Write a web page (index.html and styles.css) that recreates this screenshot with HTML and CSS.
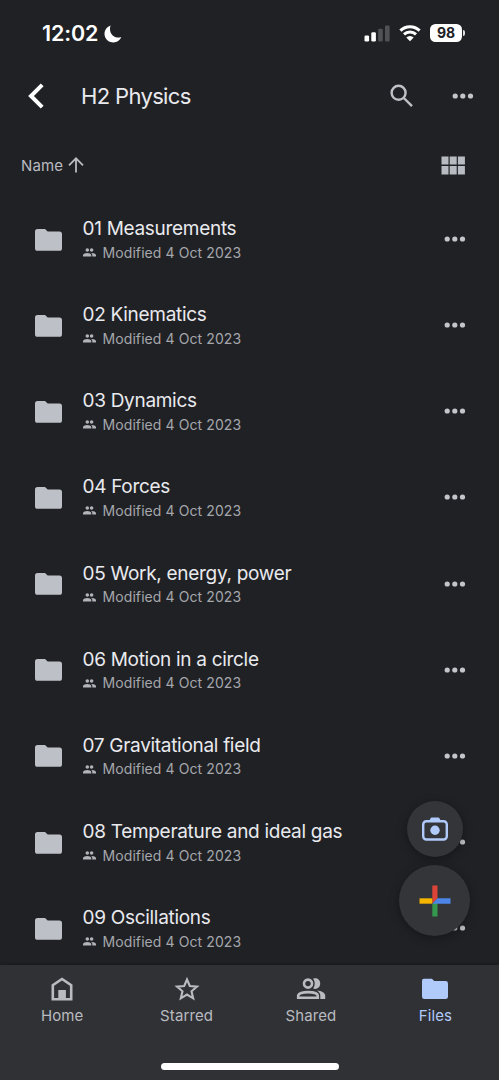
FILE: index.html
```html
<!DOCTYPE html>
<html lang="en">
<head>
<meta charset="utf-8">
<title>H2 Physics</title>
<link rel="stylesheet" href="styles.css">
</head>
<body>
<svg class="defs" width="0" height="0">
  <symbol id="folder" viewBox="0 0 28 22" preserveAspectRatio="none"><path d="M2.6 0H10.4L13.2 2.6H25.4Q28 2.6 28 5.2V19.2Q28 21.8 25.4 21.8H2.6Q0 21.8 0 19.2V2.6Q0 0 2.6 0Z"/></symbol>
  <symbol id="people" viewBox="0 0 13 9"><circle cx="4.3" cy="2" r="1.8"/><circle cx="8.6" cy="2" r="1.8"/><path d="M0 8.4V7.2C0 5.6 2.6 4.9 4.3 4.9S8.3 5.6 8.3 7.2V8.4ZM9.3 8.4V7.1C9.3 6.2 8.9 5.5 8.2 5C10.2 4.9 13 5.6 13 7.2V8.4Z"/></symbol>
  <symbol id="dots" viewBox="0 0 22 6"><circle cx="3.2" cy="3" r="2.6"/><circle cx="10.8" cy="3" r="2.6"/><circle cx="18.5" cy="3" r="2.6"/></symbol>
</svg>
<div class="screen">
  <div class="status">
    <span class="time">12:02</span>
    <svg class="moon" width="18" height="18" viewBox="0 0 18 18"><path d="M6.6 .5A8.7 8.7 0 1 0 17.3 12C11 14.6 3.8 8.6 6.6 .5Z"/></svg>
    <svg class="signal" width="26" height="17" viewBox="0 0 26 17"><rect x=".5" y="10.5" width="4.6" height="6" rx="1.3"/><rect x="7.3" y="7.3" width="4.6" height="9.2" rx="1.3"/><rect class="off" x="14.2" y="3.8" width="4.6" height="12.7" rx="1.3"/><rect class="off" x="21" y=".5" width="4.6" height="16" rx="1.3"/></svg>
    <svg class="wifi" width="22" height="17" viewBox="0 0 22 17"><path class="arc" d="M1.4 5.6A13.6 13.6 0 0 1 20.6 5.6M5 9.4A8.5 8.5 0 0 1 17 9.4"/><path d="M11 16.3L7.3 12.5A5.3 5.3 0 0 1 14.7 12.5Z"/></svg>
    <span class="battery">98</span><span class="cap"></span>
  </div>
  <header class="bar">
    <svg class="back" width="16" height="26" viewBox="0 0 16 26"><path d="M14.2 1.8L3 13L14.2 24.2"/></svg>
    <h1>H2 Physics</h1>
    <svg class="search" width="24" height="24" viewBox="0 0 24 24"><circle cx="8.6" cy="8.8" r="7"/><path d="M13.8 14L22 22.2"/></svg>
    <svg class="dots" width="22" height="6"><use href="#dots"/></svg>
  </header>
  <div class="sort">
    <span>Name</span>
    <svg class="arrow" width="16" height="16" viewBox="0 0 16 16"><path d="M8 15.5V1.5M1 8.3L8 1.3L15 8.3"/></svg>
    <svg class="grid" width="24" height="19" viewBox="0 0 24 19"><path d="M.5 .5h7v8h-7zM8.7 .5h7v8h-7zM16.9 .5h7v8h-7zM.5 10h7v8.5h-7zM8.7 10h7v8.5h-7zM16.9 10h7v8.5h-7z"/></svg>
  </div>
  <main class="list">
    <div class="row"><svg class="folder"><use href="#folder"/></svg><div class="info"><h2>01 Measurements</h2><p><svg class="people"><use href="#people"/></svg>Modified 4 Oct 2023</p></div><svg class="dots"><use href="#dots"/></svg></div>
    <div class="row"><svg class="folder"><use href="#folder"/></svg><div class="info"><h2>02 Kinematics</h2><p><svg class="people"><use href="#people"/></svg>Modified 4 Oct 2023</p></div><svg class="dots"><use href="#dots"/></svg></div>
    <div class="row"><svg class="folder"><use href="#folder"/></svg><div class="info"><h2>03 Dynamics</h2><p><svg class="people"><use href="#people"/></svg>Modified 4 Oct 2023</p></div><svg class="dots"><use href="#dots"/></svg></div>
    <div class="row"><svg class="folder"><use href="#folder"/></svg><div class="info"><h2>04 Forces</h2><p><svg class="people"><use href="#people"/></svg>Modified 4 Oct 2023</p></div><svg class="dots"><use href="#dots"/></svg></div>
    <div class="row"><svg class="folder"><use href="#folder"/></svg><div class="info"><h2>05 Work, energy, power</h2><p><svg class="people"><use href="#people"/></svg>Modified 4 Oct 2023</p></div><svg class="dots"><use href="#dots"/></svg></div>
    <div class="row"><svg class="folder"><use href="#folder"/></svg><div class="info"><h2>06 Motion in a circle</h2><p><svg class="people"><use href="#people"/></svg>Modified 4 Oct 2023</p></div><svg class="dots"><use href="#dots"/></svg></div>
    <div class="row"><svg class="folder"><use href="#folder"/></svg><div class="info"><h2>07 Gravitational field</h2><p><svg class="people"><use href="#people"/></svg>Modified 4 Oct 2023</p></div><svg class="dots"><use href="#dots"/></svg></div>
    <div class="row"><svg class="folder"><use href="#folder"/></svg><div class="info"><h2>08 Temperature and ideal gas</h2><p><svg class="people"><use href="#people"/></svg>Modified 4 Oct 2023</p></div><svg class="dots"><use href="#dots"/></svg></div>
    <div class="row"><svg class="folder"><use href="#folder"/></svg><div class="info"><h2>09 Oscillations</h2><p><svg class="people"><use href="#people"/></svg>Modified 4 Oct 2023</p></div><svg class="dots"><use href="#dots"/></svg></div>
  </main>
  <div class="fabs">
    <div class="fab scan"><svg width="26" height="24" viewBox="0 0 26 24"><path d="M7 4.5L8.3 1.8Q8.8 .6 10 .6H16Q17.2 .6 17.7 1.8L19 4.5Z"/><rect x="1.2" y="4.2" width="23.6" height="18.3" rx="3.2"/><circle cx="13" cy="13.2" r="4.7"/></svg></div>
    <div class="fab add"><svg width="32" height="32" viewBox="0 0 32 32"><path fill="#db4437" d="M13.3 .5h5.2v13l-5.2 5z"/><path fill="#f4b400" d="M.5 13.3h12.8v5.4H.5z"/><path fill="#34984f" d="M13.3 18.7l5.2-2v14.8h-5.2z"/><path fill="#4c86e8" d="M18.5 13.3h13v5.4h-18.2z"/></svg></div>
  </div>
  <nav class="tabs">
    <div class="tab"><svg width="30" height="26" viewBox="0 0 30 26"><path class="line" d="M5.8 23.2V9.2L15 3L24.2 9.2V23.2Z"/><path d="M11.3 14h7.6v9.5h-7.6z"/></svg><span>Home</span></div>
    <div class="tab"><svg width="30" height="26" viewBox="0 0 30 26"><path class="line thin" d="M15 3.5L17.8 10L25 10.6L19.5 15.3L21.2 22.4L15 18.6L8.8 22.4L10.5 15.3L5 10.6L12.2 10Z"/></svg><span>Starred</span></div>
    <div class="tab"><svg width="30" height="26" viewBox="0 0 30 26"><circle class="line" cx="12" cy="7.6" r="4"/><path class="line" d="M2.2 21.8V19.8C2.2 14.9 21.8 14.9 21.8 19.8V21.8Z"/><path d="M17 2.7C22 1.2 24.2 4.5 24.2 7.6S22 14 17 12.6C19.3 10 19.3 5.3 17 2.7ZM21 14.4C25.5 14.9 29.2 16.5 29.2 19.6V23H24.3V19.4C24.3 17.3 23 15.6 21 14.4Z"/></svg><span>Shared</span></div>
    <div class="tab active"><svg class="files" width="26" height="26"><use href="#folder" y="2.5" width="26" height="20.8"/></svg><span>Files</span></div>
  </nav>
  <div class="home-indicator"></div>
</div>
</body>
</html>
```

FILE: styles.css
```css
* { box-sizing: border-box; }
body { margin: 0; background: #fff; font-family: Inter, "Liberation Sans", sans-serif; }
.defs { position: absolute; }
svg { flex: none; display: block; }
h1, h2, p { margin: 0; font-weight: 400; white-space: nowrap; }
.screen { position: relative; display: flex; flex-direction: column; width: 499px; height: 1080px; overflow: hidden; background: #202125; color: #e9eaee; }

.status { display: flex; align-items: center; height: 66px; padding-left: 42px; flex: none; fill: #fff; color: #fff; }
.time { width: 57px; font-size: 21.5px; font-weight: 580; letter-spacing: -.1px; white-space: nowrap; }
.moon { margin: 2px 0 0 5px; }
.signal { margin-left: 242px; }
.signal .off { fill: #505155; }
.wifi { margin-left: 9px; }
.arc { fill: none; stroke: #fff; stroke-width: 3; }
.battery { width: 32px; height: 18px; margin-left: 9px; border-radius: 5.5px; background: #fff; color: #202125; font-size: 14px; font-weight: 700; line-height: 18px; text-align: center; }
.cap { width: 2px; height: 6px; margin-left: 1px; border-radius: 0 2px 2px 0; background: #ddd; }

.bar { display: flex; align-items: center; height: 60px; padding-left: 28px; flex: none; }
.back { fill: none; stroke: #fff; stroke-width: 4; }
.bar h1 { width: 309px; padding-left: 37px; font-size: 22px; letter-spacing: -.65px; }
.search { margin-left: 36.5px; fill: none; stroke: #bfc1c7; stroke-width: 2.4; }
.dots { width: 22px; height: 6px; fill: #c3c5ca; }
.bar .dots { margin-left: 38.5px; }

.sort { display: flex; align-items: center; height: 70px; padding: 8px 34px 0 21px; flex: none; color: #b9bbc0; font-size: 15px; letter-spacing: .1px; }
.arrow { margin-left: 5px; fill: none; stroke: #b9bbc0; stroke-width: 1.8; }
.grid { margin-left: auto; fill: #b8bcc2; }

.list { flex: none; height: 769px; overflow: hidden; }
.row { display: flex; align-items: center; height: 86.15px; padding: 0 33px 0 35px; }
.folder { width: 27px; height: 22px; margin-top: 1px; fill: #bdc1c7; }
.info { flex: 1; padding-left: 20.5px; }
h2 { font-size: 19px; line-height: 26px; letter-spacing: -.3px; }
.info p { display: flex; align-items: center; height: 20px; color: #a5a7ac; font-size: 14px; letter-spacing: .09px; }
.people { width: 13px; height: 9px; margin: 1px 7px 0 0; fill: #b2b4b9; }

.fabs { position: absolute; left: 399px; top: 801px; display: flex; flex-direction: column; align-items: center; gap: 8px; }
.fab { display: grid; place-items: center; border-radius: 50%; background: #343539; box-shadow: 0 2px 10px rgba(0,0,0,.35); }
.scan { width: 56px; height: 56px; fill: #b0cafa; }
.scan rect { fill: none; stroke: #b0cafa; stroke-width: 2.4; }
.add { width: 71px; height: 71px; }

.tabs { position: relative; display: grid; grid-template-columns: repeat(4, 124.4px); height: 115px; flex: none; padding-top: 11px; background: #303135; box-shadow: 0 -1px 3px rgba(0,0,0,.25); color: #b9bbc0; fill: #b9bbc0; }
.tab { display: flex; flex-direction: column; align-items: center; font-size: 15px; line-height: 24px; letter-spacing: .1px; gap: 2px; }
.line { fill: none; stroke: #b9bbc0; stroke-width: 2.6; }
.thin { stroke-width: 2.1; }
.active { color: #b0cafa; fill: #b0cafa; }
.home-indicator { position: absolute; left: 161px; top: 1063px; width: 178px; height: 7px; border-radius: 4px; background: #fff; }
```
